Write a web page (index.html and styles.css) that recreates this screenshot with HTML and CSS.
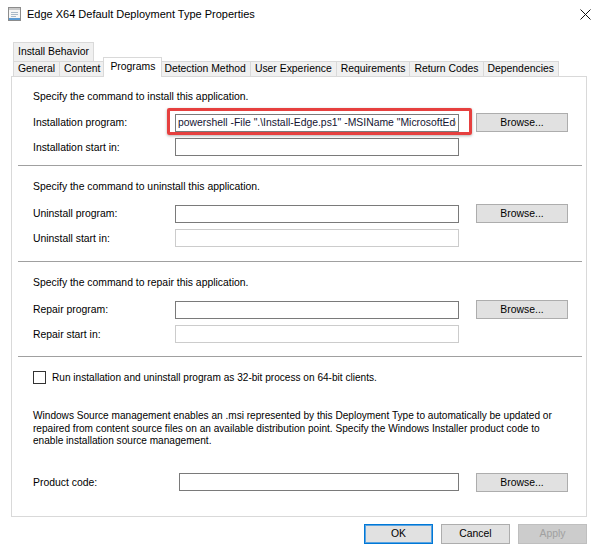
FILE: index.html
```html
<!DOCTYPE html>
<html>
<head>
<meta charset="utf-8">
<title>Edge X64 Default Deployment Type Properties</title>
<link rel="stylesheet" href="styles.css">
</head>
<body>
<div class="window">

	<div class="titlebar">
		<svg class="app-icon" width="13" height="14" viewBox="0 0 13 14">
			<rect x="0.5" y="0.5" width="12" height="13" fill="#f6f6f6" stroke="#8c8c8c"/>
			<rect x="1" y="1" width="11" height="2" fill="#c9c9c9"/>
			<line x1="3" y1="5.5" x2="10" y2="5.5" stroke="#a9b9c8"/>
			<line x1="3" y1="7.5" x2="10" y2="7.5" stroke="#a9b9c8"/>
			<line x1="3" y1="9.5" x2="8" y2="9.5" stroke="#a9b9c8"/>
			<rect x="1" y="11" width="11" height="2" fill="#5b9bd5"/>
		</svg>
		<span class="title">Edge X64 Default Deployment Type Properties</span>
		<svg class="close" width="11" height="11" viewBox="0 0 11 11">
			<path d="M0.5 0.5 L10.5 10.5 M10.5 0.5 L0.5 10.5" stroke="#111" stroke-width="1"/>
		</svg>
	</div>

	<div class="dialog">
		<!-- tabs -->
		<div class="tab-row tab-row-back">
			<span class="tab">Install Behavior</span>
		</div>
		<div class="tab-row">
			<span class="tab">General</span>
			<span class="tab">Content</span>
			<span class="tab active">Programs</span>
			<span class="tab">Detection Method</span>
			<span class="tab">User Experience</span>
			<span class="tab">Requirements</span>
			<span class="tab">Return Codes</span>
			<span class="tab">Dependencies</span>
		</div>

		<div class="panel">
			<!-- install -->
			<div class="section section-first">
				<p class="heading">Specify the command to install this application.</p>
				<div class="field-row">
					<label>Installation program:</label>
					<div class="field-wrap">
						<input class="textbox" type="text" value='powershell -File ".\Install-Edge.ps1" -MSIName "MicrosoftEdgeEnterpriseX64.msi"'>
						<span class="highlight"></span>
					</div>
					<button class="btn">Browse...</button>
				</div>
				<div class="field-row">
					<label>Installation start in:</label>
					<input class="textbox" type="text">
				</div>
			</div>

			<!-- uninstall -->
			<div class="section">
				<p class="heading">Specify the command to uninstall this application.</p>
				<div class="field-row">
					<label>Uninstall program:</label>
					<input class="textbox" type="text">
					<button class="btn">Browse...</button>
				</div>
				<div class="field-row">
					<label>Uninstall start in:</label>
					<input class="textbox" type="text" disabled>
				</div>
			</div>

			<!-- repair -->
			<div class="section section-repair">
				<p class="heading">Specify the command to repair this application.</p>
				<div class="field-row">
					<label>Repair program:</label>
					<input class="textbox" type="text">
					<button class="btn">Browse...</button>
				</div>
				<div class="field-row">
					<label>Repair start in:</label>
					<input class="textbox" type="text" disabled>
				</div>
			</div>

			<!-- source management -->
			<div class="section section-source">
				<label class="check-row">
					<input class="check" type="checkbox">
					<span>Run installation and uninstall program as 32-bit process on 64-bit clients.</span>
				</label>
				<p class="note">Windows Source management enables an .msi represented by this Deployment Type to automatically be updated or<br>repaired from content source files on an available distribution point. Specify the Windows Installer product code to<br>enable installation source management.</p>
				<div class="field-row field-row-product">
					<label>Product code:</label>
					<input class="textbox" type="text">
					<button class="btn">Browse...</button>
				</div>
			</div>
		</div>

		<div class="actions">
			<button class="btn btn-action btn-default">OK</button>
			<button class="btn btn-action">Cancel</button>
			<button class="btn btn-action" disabled>Apply</button>
		</div>
	</div>

</div>
</body>
</html>
```

FILE: styles.css
```css
* {
	box-sizing: border-box;
}
body {
	margin: 0;
	background: #fff;
	font-family: 'Liberation Sans', Arial, sans-serif;
	font-size: 10.4px;
	color: #000;
}
.window {
	width: 600px;
	height: 557px;
	background: #fff;
}
/* title bar */
.titlebar {
	display: flex;
	align-items: center;
	height: 28px;
	padding: 0 9px 0 8px;
}
.app-icon {
	display: block;
	margin-right: 6px;
}
.title {
	font-size: 11px;
	line-height: 14px;
}
.close {
	display: block;
	margin-left: auto;
}
/* dialog body */
.dialog {
	padding: 14px 13px 0 11px;
}
.tab-row {
	display: flex;
	align-items: flex-end;
	height: 15px;
	padding-left: 2px;
}
.tab-row-back {
	height: 19px;
}
.tab {
	display: block;
	height: 15px;
	line-height: 14px;
	padding: 0 4px;
	background: #f0f0f0;
	border: 1px solid #d9d9d9;
	border-bottom: none;
	border-left: none;
	white-space: nowrap;
}
.tab:first-child {
	border-left: 1px solid #d9d9d9;
}
.tab-row-back .tab {
	height: 19px;
	line-height: 18px;
	padding: 0 4px 0 4px;
}
.tab.active {
	position: relative;
	z-index: 1;
	height: 20px;
	line-height: 17px;
	margin: 0 -2px -1px -2px;
	padding: 0 6px;
	background: #fff;
	border-left: 1px solid #d9d9d9;
}
.panel {
	border: 1px solid #d9d9d9;
	padding: 0 4px 0 6px;
	background: #fff;
}
.section {
	padding: 14px 0 14px 15px;
	border-top: 1px solid #a0a0a0;
}
.section-first {
	border-top: none;
	padding-top: 13px;
	padding-bottom: 9px;
}
.section-repair {
	padding-bottom: 13px;
}
.heading {
	margin: 0 0 10px;
	line-height: 14px;
	white-space: nowrap;
}
.section-first .heading {
	margin-bottom: 9px;
}
.field-row {
	display: grid;
	grid-template-columns: 125px 284px 92px;
	column-gap: 17px;
	align-items: center;
	height: 18px;
}
.field-row + .field-row {
	margin-top: 7px;
}
.field-row label {
	white-space: nowrap;
}
.field-wrap {
	position: relative;
	height: 18px;
}
.textbox {
	display: block;
	width: 100%;
	height: 18px;
	margin: 0;
	padding: 0 2px;
	border: 1px solid #7a7a7a;
	background: #fff;
	font-family: inherit;
	font-size: 10.4px;
	color: #141432;
	outline: none;
}
.textbox:disabled {
	border-color: #cccccc;
	background: #fff;
}
/* red call-out drawn over the screenshot */
.highlight {
	position: absolute;
	left: -8px;
	right: -13px;
	top: -6px;
	bottom: -3px;
	border: 3px solid #e6403f;
	border-radius: 2px;
	box-shadow: 0 1px 3px rgba(0, 0, 0, .3);
	pointer-events: none;
}
.btn {
	height: 19px;
	margin: 0;
	padding: 0;
	border: 1px solid #adadad;
	background: #e1e1e1;
	font-family: inherit;
	font-size: 10.4px;
	color: #000;
}
.btn:disabled {
	background: #cccccc;
	border-color: #bfbfbf;
	color: #a0a0a0;
}
.btn-default {
	border-color: #0078d7;
	box-shadow: inset 0 0 0 1px #5aa3e0;
}
/* source management */
.section-source {
	padding-top: 13px;
	padding-bottom: 25px;
}
.check-row {
	display: flex;
	align-items: center;
	height: 14px;
	font-size: 10.1px;
	white-space: nowrap;
}
.check {
	appearance: none;
	-webkit-appearance: none;
	display: block;
	width: 13px;
	height: 13px;
	margin: 0 6px 0 0;
	border: 1px solid #333;
	background: #fff;
}
.note {
	margin: 26px 0 0;
	font-size: 10.1px;
	line-height: 12.5px;
	white-space: nowrap;
}
.field-row-product {
	grid-template-columns: 129px 280px 92px;
	margin-top: 25px;
}
.actions {
	display: flex;
	justify-content: flex-end;
	gap: 8px;
	margin-top: 7px;
}
.btn-action {
	width: 69px;
	height: 20px;
}
```
